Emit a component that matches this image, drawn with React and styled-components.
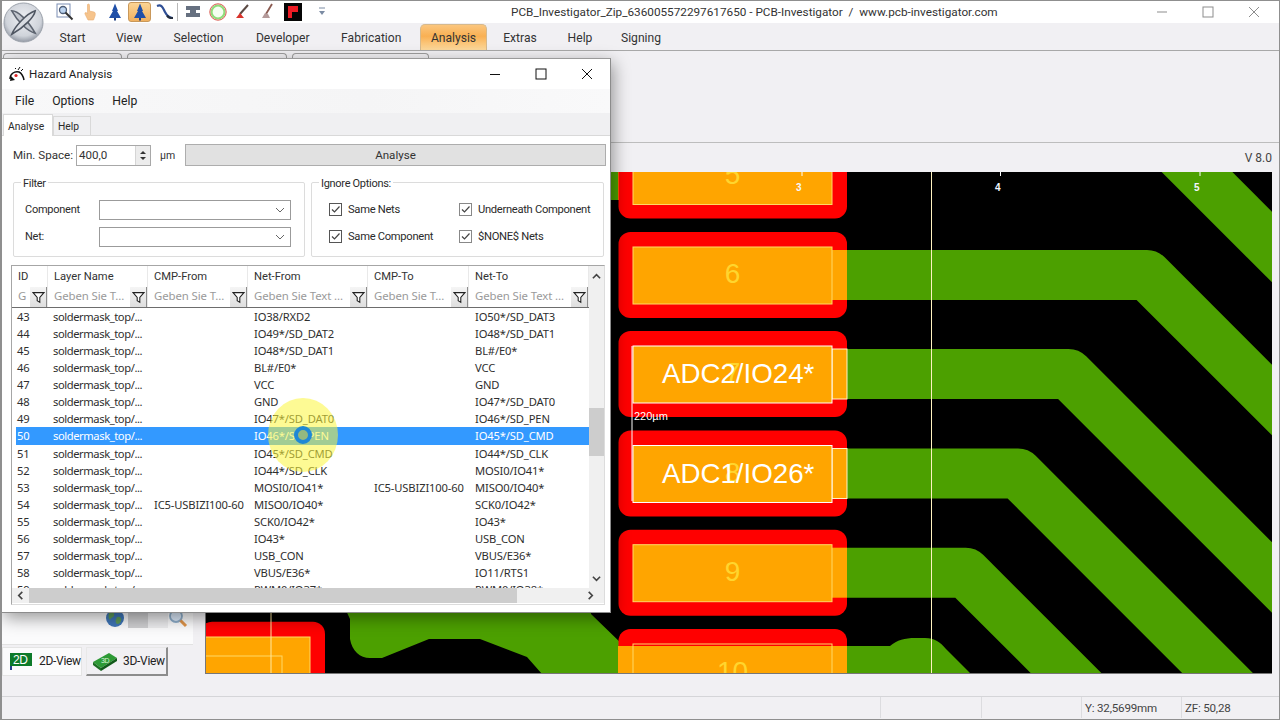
import styled, { createGlobalStyle } from "styled-components";

const GlobalStyle = createGlobalStyle`
  html, body {
    margin: 0;
    padding: 0;
    background: #f1f0f3;
  }
  * {
    box-sizing: border-box;
  }
`;

const Window = styled.div`
  position: relative;
  width: 1280px;
  height: 720px;
  overflow: hidden;
  display: flex;
  flex-direction: column;
  background: #f1f0f3;
  border: 1px solid #8f8f8f;
  border-left-width: 2px;
  font-family: Roboto, "Liberation Sans", sans-serif;
  color: #2b2b2b;
`;

const Logo = styled.svg`
  position: absolute;
  left: 1px;
  top: 1px;
  width: 41px;
  height: 41px;
`;

const TopBar = styled.div`
  height: 22px;
  flex: none;
  display: flex;
  align-items: center;
  padding-right: 2px;
  background: #fff;
`;

const QuickBar = styled.div`
  display: flex;
  align-items: center;
  width: 338px;
  height: 22px;
  padding-left: 50px;
`;

const QuickIcon = styled.div`
  width: ${(p) => p.$width || 25}px;
  height: 20px;
  flex: none;
  display: flex;
  align-items: center;
  justify-content: center;
  svg {
    width: 18px;
    height: 18px;
  }
`;

const ActiveIcon = styled(QuickIcon)`
  width: 23px;
  margin: 0 1px;
  background: linear-gradient(#fcd494, #f0b160);
  border: 1px solid #c9985a;
  border-radius: 3px;
`;

const QuickSep = styled.div`
  width: 1px;
  height: 18px;
  margin-right: 2px;
  background: #b8b8b8;
`;

const AppTitle = styled.div`
  flex: 1;
  padding-left: 171px;
  font-size: 11.75px;
  white-space: pre;
  color: #333;
`;

const WinButton = styled.div`
  width: 46px;
  height: 22px;
  flex: none;
  display: flex;
  align-items: center;
  justify-content: center;
  svg {
    width: 12px;
    height: 12px;
    stroke: ${(p) => p.$color || "#8d8d8d"};
    fill: none;
  }
`;

const RibbonTabs = styled.div`
  height: 28px;
  flex: none;
  display: flex;
  align-items: flex-end;
  padding-left: 42.5px;
  border-bottom: 1px solid #a8a8a8;
  background: #f1f0f3;
`;

const RibbonTab = styled.div`
  width: ${(p) => p.$width}px;
  height: 26px;
  flex: none;
  padding-top: 1px;
  display: flex;
  align-items: center;
  justify-content: center;
  font-size: 12.1px;
  color: #333;
  border-radius: 5px 5px 0 0;
  ${(p) =>
    p.$active &&
    `
    background: linear-gradient(#fbc67e 0%, #f9b053 45%, #fdda9d 100%);
    border: 1px solid #d6b98c;
    border-bottom: none;
    padding-top: 0;
    margin-left: 3.5px;
  `}
`;

const RibbonBody = styled.div`
  height: 91px;
  flex: none;
  display: flex;
  gap: 5px;
  padding: 2px 0 0 1px;
  background: #f1f0f3;
`;

const RibbonGroup = styled.div`
  width: ${(p) => p.$width}px;
  height: 10px;
  border: 1px solid #9d9d9d;
  border-bottom: none;
  border-radius: 4px 4px 0 0;
`;

const InfoBar = styled.div`
  height: 30px;
  flex: none;
  display: flex;
  align-items: center;
  justify-content: flex-end;
  padding-right: 7px;
  font-size: 12px;
  color: #444;
  border-top: 1px solid #bdbdbd;
`;

const MainRow = styled.div`
  height: 503px;
  flex: none;
  display: flex;
  padding-right: 7px;
`;

const Sidebar = styled.div`
  width: 203px;
  flex: none;
  display: flex;
  flex-direction: column;
`;

const SidePanel = styled.div`
  width: 191px;
  flex: 1;
  display: flex;
  align-items: flex-end;
  justify-content: flex-end;
  padding: 0 5px 16px 0;
  background: #fbfbfc;
  border-bottom: 1px solid #e2e2e2;
`;

const SideIcon = styled.svg`
  width: 20px;
  height: 20px;
  margin-right: ${(p) => p.$gap || 0}px;
`;

const SideSwatch = styled.div`
  width: 20px;
  height: 20px;
  background: ${(p) => p.$color};
`;

const ViewTabs = styled.div`
  height: 32px;
  flex: none;
  margin-bottom: -2px;
  display: flex;
  align-items: center;
  gap: 4px;
`;

const ViewTab = styled.div`
  width: ${(p) => p.$width}px;
  height: 29px;
  display: flex;
  align-items: center;
  gap: 5px;
  padding-left: 5px;
  font-size: 12px;
  letter-spacing: -0.3px;
  white-space: nowrap;
  color: #222;
  background: ${(p) => (p.$active ? "#fbfbfc" : "#f1f0f3")};
  border: 1px solid #e4e4e4;
  ${(p) =>
    !p.$active &&
    `
    border-color: #e8e8e8 #8c8c8c #8c8c8c #e8e8e8;
    border-width: 1px 2px 2px 1px;
  `}
  svg {
    width: 26px;
    height: 20px;
    flex: none;
  }
`;

const Canvas = styled.svg`
  flex: 1;
  height: 502px;
  display: block;
  border-left: 1px solid #777;
  border-bottom: 1px solid #777;
  background: #000;
`;

const StatusBar = styled.div`
  height: 22px;
  flex: none;
  margin-top: 21px;
  display: flex;
  justify-content: flex-end;
  border-top: 1px solid #d5d5d8;
`;

const StatusCell = styled.div`
  width: ${(p) => p.$width}px;
  display: flex;
  align-items: center;
  padding-left: 3px;
  border-left: 1px solid #dcdcdf;
  font-size: 11.6px;
  letter-spacing: -0.2px;
  color: #444;
`;

const Dialog = styled.div`
  position: absolute;
  left: 0;
  top: 57px;
  width: 609px;
  height: 555px;
  display: flex;
  flex-direction: column;
  background: #fff;
  border-top: 1px solid #9a9a9a;
  border-right: 1px solid #8c8c8c;
  border-bottom: 1px solid #8c8c8c;
  box-shadow: 2px 5px 16px rgba(0, 0, 0, 0.4);
`;

const DialogTitle = styled.div`
  height: 30px;
  flex: none;
  display: flex;
  align-items: center;
  padding-left: 6px;
  font-size: 11.6px;
  color: #222;
  svg.app-mark {
    margin-right: 3px;
  }
`;

const TitleText = styled.div`
  flex: 1;
`;

const DialogMenu = styled.div`
  height: 24px;
  flex: none;
  display: flex;
  align-items: center;
  gap: 18px;
  padding-left: 13px;
  font-size: 12.2px;
  color: #222;
  background: linear-gradient(90deg, #f8f8f9, #f5f5f6 60%, #f9f9fa);
`;

const DialogTabs = styled.div`
  height: 23px;
  flex: none;
  display: flex;
  align-items: flex-end;
  padding-left: 1px;
  background: #f0f0f2;
  border-bottom: 1px solid #d9d9d9;
`;

const DialogTab = styled.div`
  width: ${(p) => p.$width}px;
  height: ${(p) => (p.$active ? 22 : 19)}px;
  padding: 1px 0 0 4px;
  display: flex;
  align-items: center;
  font-size: 10.3px;
  background: ${(p) => (p.$active ? "#fff" : "#f0f0f2")};
  border: 1px solid #d9d9d9;
  border-bottom: none;
  margin-bottom: ${(p) => (p.$active ? -1 : 0)}px;
`;

const DialogBody = styled.div`
  flex: 1;
  display: flex;
  flex-direction: column;
  padding: 8px 5px 0 9px;
`;

const SpaceRow = styled.div`
  height: 22px;
  flex: none;
  display: flex;
  align-items: center;
  margin-right: -1px;
  font-size: 11.6px;
  color: #333;
`;

const SpaceLabel = styled.div`
  width: 65px;
  padding-left: 2px;
  flex: none;
  white-space: nowrap;
`;

const SpinBox = styled.div`
  width: 75px;
  height: 21px;
  flex: none;
  display: flex;
  border: 1px solid #a8a8a8;
  font-size: 11.6px;
`;

const SpinValue = styled.div`
  flex: 1;
  padding-left: 2px;
  line-height: 18px;
`;

const SpinArrows = styled.div`
  width: 15px;
  display: flex;
  flex-direction: column;
  align-items: center;
  justify-content: center;
  gap: 3px;
  background: #ececec;
  border-left: 1px solid #d5d5d5;
`;

const SpinArrow = styled.div`
  width: 0;
  height: 0;
  border-left: 3px solid transparent;
  border-right: 3px solid transparent;
  ${(p) => (p.$down ? "border-top: 3px solid #333;" : "border-bottom: 3px solid #333;")}
`;

const UnitLabel = styled.div`
  width: 34px;
  flex: none;
  padding-left: 9px;
  font-size: 10.5px;
`;

const AnalyseButton = styled.div`
  flex: 1;
  height: 22px;
  display: flex;
  align-items: center;
  justify-content: center;
  background: #e1e1e1;
  border: 1px solid #adadad;
  font-size: 11.6px;
`;

const GroupRow = styled.div`
  display: flex;
  gap: 6px;
  margin: 16px 0 0 2px;
  height: 75px;
  flex: none;
`;

const GroupBox = styled.div`
  position: relative;
  width: ${(p) => p.$width}px;
  padding: 17px 13px 0 ${(p) => p.$left}px;
  border: 1px solid #dcdcdc;
  border-radius: 2px;
`;

const Legend = styled.div`
  position: absolute;
  left: 7px;
  top: -5px;
  padding: 0 2px;
  background: #fff;
  font-size: 11px;
  letter-spacing: -0.3px;
  line-height: 12px;
`;

const FilterGrid = styled.div`
  display: grid;
  grid-template-columns: 74px 192px;
  grid-auto-rows: 21px;
  row-gap: 6px;
  align-items: start;
  font-size: 11px;
  letter-spacing: -0.25px;
  line-height: 20px;
`;

const Combo = styled.div`
  height: 20px;
  display: flex;
  align-items: center;
  justify-content: flex-end;
  padding-right: 5px;
  border: 1px solid #9b9b9b;
  svg {
    width: 10px;
    height: 6px;
  }
`;

const OptionGrid = styled.div`
  display: grid;
  grid-template-columns: 130px 1fr;
  grid-auto-rows: 21px;
  row-gap: 6px;
  align-items: center;
`;

const Option = styled.div`
  display: flex;
  align-items: center;
  gap: 6px;
  padding-bottom: 2px;
  font-size: 11.2px;
  letter-spacing: -0.3px;
  white-space: nowrap;
`;

const CheckBox = styled.div`
  width: 13px;
  height: 13px;
  flex: none;
  display: flex;
  border: 1px solid ${(p) => p.$border};
  svg {
    width: 11px;
    height: 11px;
  }
`;

const TableBox = styled.div`
  height: 340px;
  flex: none;
  margin-top: 8px;
  display: flex;
  flex-direction: column;
  border: 1px solid #a6a6a6;
  border-right-color: #dcdcdc;
  border-bottom-color: #dcdcdc;
  overflow: hidden;
`;

const TableTop = styled.div`
  flex: 1;
  display: flex;
  min-height: 0;
`;

const TableMain = styled.div`
  width: 577px;
  flex: none;
  display: flex;
  flex-direction: column;
`;

const HeadRow = styled.div`
  display: grid;
  grid-template-columns: 36px 100px 100px 120px 101px 120px;
  height: ${(p) => p.$height}px;
  flex: none;
  ${(p) => p.$line && "border-bottom: 1px solid #6d6d6d;"}
`;

const HeadCell = styled.div`
  display: flex;
  align-items: center;
  justify-content: space-between;
  padding: 0 0 0 6px;
  font-size: 11.2px;
  white-space: nowrap;
  overflow: hidden;
  color: #333;
  border-right: 1px solid #e9e9e9;
`;

const HintCell = styled(HeadCell)`
  padding-bottom: 2px;
  align-items: flex-end;
  line-height: 18px;
  font-family: "Noto Sans", sans-serif;
  font-size: 11.4px;
  letter-spacing: -0.1px;
  color: #9a9a9a;
`;

const FilterButton = styled.div`
  width: 17px;
  height: 20px;
  flex: none;
  margin-bottom: -2px;
  display: flex;
  align-items: center;
  justify-content: center;
  background: linear-gradient(#f5f5f5, #dedede);
  border-right: 1px solid #8d8d8d;
  svg {
    width: 13px;
    height: 13px;
  }
`;

const Rows = styled.div`
  flex: 1;
  min-height: 0;
  overflow: hidden;
  padding-left: 4px;
`;

const Row = styled.div`
  display: grid;
  grid-template-columns: 32px 100px 100px 120px 101px 120px;
  height: 17.07px;
  align-items: center;
  font-family: "Noto Sans", sans-serif;
  font-size: 11.2px;
  letter-spacing: -0.14px;
  white-space: nowrap;
  color: ${(p) => (p.$selected ? "#fff" : "#2e2e2e")};
  background: ${(p) => (p.$selected ? "#3399ff" : "transparent")};
`;

const RowCell = styled.div`
  padding-left: ${(p) => p.$pad || 6}px;
  overflow: hidden;
`;

const LayerCell = styled(RowCell)`
  padding-left: 5px;
  letter-spacing: -0.42px;
`;

const VScroll = styled.div`
  flex: 1;
  display: flex;
  flex-direction: column;
  background: #f0f0f0;
`;

const ScrollArrow = styled.div`
  height: ${(p) => p.$size || 17}px;
  width: ${(p) => p.$width || "auto"};
  flex: none;
  display: flex;
  align-items: center;
  justify-content: center;
  svg {
    width: 9px;
    height: 9px;
  }
`;

const VTrack = styled.div`
  flex: 1;
  padding-top: ${(p) => p.$offset}px;
`;

const VThumb = styled.div`
  height: 48px;
  background: #cdcdcd;
`;

const HScroll = styled.div`
  height: 15px;
  flex: none;
  margin-bottom: 1px;
  display: flex;
  align-items: center;
  background: #f0f0f0;
`;

const HThumb = styled.div`
  width: 488px;
  height: 15px;
  margin-left: 1px;
  background: #cdcdcd;
`;

const HRest = styled.div`
  flex: 1;
`;

const CursorGlow = styled.div`
  position: absolute;
  left: 266px;
  top: 397px;
  width: 70px;
  height: 74px;
  border-radius: 50%;
  display: flex;
  align-items: center;
  justify-content: center;
  background: rgba(252, 245, 60, 0.55);
`;

const CursorDot = styled.div`
  width: 18px;
  height: 18px;
  border-radius: 50%;
  background: #94b97f;
  border: 4px solid #1f88d6;
`;

const tabs = [
  ["Start", 56],
  ["View", 57],
  ["Selection", 82],
  ["Developer", 86.5],
  ["Fabrication", 90.5],
  ["Analysis", 67],
  ["Extras", 66],
  ["Help", 54],
  ["Signing", 68],
];

const rows = [
  ["43", "", "IO38/RXD2", "", "IO50*/SD_DAT3"],
  ["44", "", "IO49*/SD_DAT2", "", "IO48*/SD_DAT1"],
  ["45", "", "IO48*/SD_DAT1", "", "BL#/E0*"],
  ["46", "", "BL#/E0*", "", "VCC"],
  ["47", "", "VCC", "", "GND"],
  ["48", "", "GND", "", "IO47*/SD_DAT0"],
  ["49", "", "IO47*/SD_DAT0", "", "IO46*/SD_PEN"],
  ["50", "", "IO46*/SD_PEN", "", "IO45*/SD_CMD"],
  ["51", "", "IO45*/SD_CMD", "", "IO44*/SD_CLK"],
  ["52", "", "IO44*/SD_CLK", "", "MOSI0/IO41*"],
  ["53", "", "MOSI0/IO41*", "IC5-USBIZI100-60", "MISO0/IO40*"],
  ["54", "IC5-USBIZI100-60", "MISO0/IO40*", "", "SCK0/IO42*"],
  ["55", "", "SCK0/IO42*", "", "IO43*"],
  ["56", "", "IO43*", "", "USB_CON"],
  ["57", "", "USB_CON", "", "VBUS/E36*"],
  ["58", "", "VBUS/E36*", "", "IO11/RTS1"],
  ["59", "", "PWM0/IO37*", "", "PWM0/IO38*"],
];

const headers = [
  ["ID", "G"],
  ["Layer Name", "Geben Sie T..."],
  ["CMP-From", "Geben Sie T..."],
  ["Net-From", "Geben Sie Text ..."],
  ["CMP-To", "Geben Sie T..."],
  ["Net-To", "Geben Sie Text ..."],
];

const pads = [
  { top: 133.5, label: "5" },
  { top: 233, label: "6", trace: 276, corner: 1147 },
  { top: 332, label: "7", trace: 375, corner: 1068.5, name: "ADC2/IO24*" },
  { top: 431.5, label: "8", trace: 474.5, corner: 1018, name: "ADC1/IO26*" },
  { top: 530.7, label: "9", trace: 573.7, corner: 965.7 },
];

const Tree = () => (
  <svg viewBox="0 0 18 18">
    <path d="M9 0.500 12 8H11L15 15H3L7 8H6Z" fill="#1f4fa8" />
    <rect x="8" y="15" width="2" height="2.500" fill="#1f3f80" />
  </svg>
);

const Funnel = () => (
  <svg viewBox="0 0 12 12">
    <path d="M1 1.500H11L7.200 6V10.500L4.800 9V6Z" fill="#fff" stroke="#222" strokeWidth="1" />
  </svg>
);

const Chevron = ({ d }) => (
  <svg viewBox="0 0 10 10">
    <path d={d} fill="none" stroke="#444" strokeWidth="1.800" />
  </svg>
);

const Check = () => (
  <svg viewBox="0 0 11 11">
    <path d="M2 5.500 4.500 8 9.500 2.500" fill="none" stroke="#444" strokeWidth="1.200" />
  </svg>
);

const PadShape = ({ top, label, trace, name }) => {
  const selected = Boolean(name);
  const line = selected ? "#ffffff" : "#ffd966";
  return (
    <g>
      <rect x="618.5" y={top} width="228.500" height="86" rx="12" fill="#ff0000" />
      {trace && <rect x="832" y={trace - 25} width="15" height="50" fill="#ffa500" stroke={selected ? "#fff2c8" : "none"} strokeWidth="1" />}
      <rect x="633" y={top + 15} width="199" height="57" fill="#ffa500" stroke={line} strokeWidth="1" />
      <text x="732.500" y={top + 51} textAnchor="middle" fontSize="28" fontFamily="Liberation Sans" fill="#ffd52e">
        {label}
      </text>
      {name && (
        <text x="662" y={top + 52} fontSize="27.700" fontFamily="Liberation Sans" fill="#ffffff">
          {name}
        </text>
      )}
    </g>
  );
};

const Board = () => (
  <Canvas viewBox="206 173 1066 501" preserveAspectRatio="none">
    <path
      d="M343 605 350 620V640C352 652 360 659 370 659H382L429 640H480L527 658 542 675H625V648L591 615V605Z"
      fill="#4ca000"
    />
    <rect x="200" y="622.700" width="125" height="70" rx="12" fill="#ff0000" />
    <rect x="200" y="638" width="110" height="50" fill="#ffa500" stroke="#ffd966" />
    <rect x="200" y="657" width="82" height="30" fill="none" stroke="#ffd966" />
    <line x1="271" y1="600" x2="271" y2="680" stroke="#ffe9a0" />

    <rect x="605" y="165" width="20" height="36" fill="#4ca000" />
    <path d="M1097 73 1400 376" fill="none" stroke="#4ca000" strokeWidth="50" />
    {pads
      .filter((p) => p.trace)
      .map((p) => (
        <path
          key={p.label}
          d={`M840 ${p.trace}H${p.corner}L${p.corner + 400} ${p.trace + 400}`}
          fill="none"
          stroke="#4ca000"
          strokeWidth="50"
          strokeLinejoin="round"
        />
      ))}
    <path d="M847 647H890C897 641 905 639 915 639H925C935 639 940 643 946 650L971 675H847Z" fill="#4ca000" />

    <rect x="618" y="165" width="15" height="36" fill="#ffa500" />
    {pads.map((p) => (
      <PadShape key={p.label} {...p} />
    ))}
    <rect x="618.500" y="630" width="228.500" height="60" rx="12" fill="#ff0000" />
    <rect x="618" y="647" width="229" height="40" fill="#ffa500" />
    <rect x="633" y="645" width="199" height="40" fill="none" stroke="#ffd966" />
    <text x="732.500" y="682" textAnchor="middle" fontSize="28" fontFamily="Liberation Sans" fill="#ffd52e">
      10
    </text>

    <line x1="632" y1="347" x2="632" y2="502" stroke="#ffffff" />
    <line x1="931.500" y1="173" x2="931.500" y2="675" stroke="#fff2c0" />
    <text x="634" y="421" fontSize="11" fontFamily="Liberation Sans" fill="#ffffff">
      220µm
    </text>

    {[
      [802, 798, "3"],
      [1000.5, 997, "4"],
      [1200, 1196, "5"],
    ].map(([tick, x, label]) => (
      <g key={label}>
        <line x1={tick} y1="173" x2={tick} y2="177" stroke="#ffffff" />
        <text x={x - 2} y="192" fontSize="10" fontWeight="bold" fontFamily="Liberation Sans" fill="#f3f6ff">
          {label}
        </text>
      </g>
    ))}
  </Canvas>
);

const App = () => (
  <Window>
    <GlobalStyle />
    <TopBar>
      <QuickBar>
        <QuickIcon>
          <svg viewBox="0 0 18 18">
            <rect x="1" y="1" width="13" height="13" fill="#fff" stroke="#7d8fb5" />
            <circle cx="7" cy="7" r="3.500" fill="#bcd4f0" stroke="#4d5d78" strokeWidth="1.300" />
            <path d="M9.500 9.500 16.500 16.500" stroke="#333" strokeWidth="2" />
          </svg>
        </QuickIcon>
        <QuickIcon>
          <svg viewBox="0 0 18 18">
            <path d="M6.500 1.500C7.500.5 8.500 1 8.500 2.500V8L13 9C14.500 9.500 14.500 11 14 13L12.500 17H7L4 11C3.500 9.500 5 9 6.500 10.500Z" fill="#f6c48c" stroke="#e9ad70" strokeWidth=".6" />
          </svg>
        </QuickIcon>
        <QuickIcon>
          <Tree />
        </QuickIcon>
        <ActiveIcon>
          <Tree />
        </ActiveIcon>
        <QuickIcon>
          <svg viewBox="0 0 18 18">
            <path d="M1 3C6 1 7 5 9 9 11 13 13 15 17 15" fill="none" stroke="#2f4f96" strokeWidth="2.200" />
            <path d="M11 12.500C13 15 14 15 17 15" fill="none" stroke="#222c3e" strokeWidth="2.200" />
          </svg>
        </QuickIcon>
        <QuickSep />
        <QuickIcon>
          <svg viewBox="0 0 18 18">
            <path d="M2 3H16V7H12V10H16V14H2V10H6V7H2Z" fill="#667080" />
          </svg>
        </QuickIcon>
        <QuickIcon>
          <svg viewBox="0 0 18 18">
            <circle cx="9" cy="9" r="6.500" fill="#f4fff0" stroke="#8fdc7a" strokeWidth="2.200" />
            <circle cx="9" cy="9" r="8.200" fill="none" stroke="#d9574e" strokeWidth="1" />
          </svg>
        </QuickIcon>
        <QuickIcon>
          <svg viewBox="0 0 18 18">
            <path d="M14 2 6 11" stroke="#5b4a44" strokeWidth="2" />
            <path d="M6 10 2 15H10Z" fill="#d9332b" />
          </svg>
        </QuickIcon>
        <QuickIcon>
          <svg viewBox="0 0 18 18">
            <path d="M13 1 7 11" stroke="#8a5a50" strokeWidth="1.800" />
            <path d="M6 10 3 15H11L9 11Z" fill="#b49a9a" />
          </svg>
        </QuickIcon>
        <QuickIcon>
          <svg viewBox="0 0 18 18">
            <rect width="18" height="18" fill="#050505" />
            <path d="M4 3H14V9H8V15H4Z" fill="#ee1c25" />
          </svg>
        </QuickIcon>
        <QuickIcon $width={33}>
          <svg viewBox="0 0 18 18">
            <path d="M6 5H12" stroke="#7b8ba3" strokeWidth="1" />
            <path d="M6 8H12L9 12Z" fill="#7b8ba3" />
          </svg>
        </QuickIcon>
      </QuickBar>
      <AppTitle>{"PCB_Investigator_Zip_636005572297617650 - PCB-Investigator  /  www.pcb-investigator.com"}</AppTitle>
      <WinButton>
        <svg viewBox="0 0 12 12">
          <path d="M1 6H11" />
        </svg>
      </WinButton>
      <WinButton>
        <svg viewBox="0 0 12 12">
          <rect x="1" y="1" width="10" height="10" />
        </svg>
      </WinButton>
      <WinButton>
        <svg viewBox="0 0 12 12">
          <path d="M1 1 11 11M11 1 1 11" />
        </svg>
      </WinButton>
    </TopBar>
    <RibbonTabs>
      {tabs.map(([tab, width]) => (
        <RibbonTab key={tab} $width={width} $active={tab === "Analysis"}>
          {tab}
        </RibbonTab>
      ))}
    </RibbonTabs>
    <RibbonBody>
      <RibbonGroup $width={119} />
      <RibbonGroup $width={160} />
      <RibbonGroup $width={137} />
    </RibbonBody>
    <InfoBar>V 8.0</InfoBar>
    <MainRow>
      <Sidebar>
        <SidePanel>
          <SideIcon $gap={3} viewBox="0 0 20 20">
            <circle cx="10" cy="10" r="9" fill="#3f76b8" />
            <path d="M5 4C8 3 10 5 9 8 8 10 6 9 5 12 3 10 3 6 5 4ZM12 9C15 8 17 10 16 13 15 16 12 17 11 15 10 13 11 11 12 9Z" fill="#5d9a5a" />
          </SideIcon>
          <SideSwatch $color="#cfcfd1" />
          <SideSwatch $color="#ececee" />
          <SideIcon viewBox="0 0 20 20">
            <circle cx="8" cy="8" r="6" fill="#dceafa" stroke="#8eaecb" strokeWidth="1.800" />
            <path d="M12.500 12.500 18 18" stroke="#e0954a" strokeWidth="3" />
          </SideIcon>
        </SidePanel>
        <ViewTabs>
          <ViewTab $active $width={80}>
            <svg viewBox="0 0 26 20">
              <path d="M2 2H24V15H4V19H2Z" fill="#0d7a2a" />
              <path d="M2 15H4V19H2Z" fill="#23408e" />
              <text x="5" y="13" fontSize="12" fontFamily="Liberation Sans" fill="#fff">
                2D
              </text>
            </svg>
            2D-View
          </ViewTab>
          <ViewTab $width={82}>
            <svg viewBox="0 0 26 20">
              <path d="M1 11 17 2 25 7 9 17Z" fill="#2d9a35" />
              <path d="M1 11 9 17V20L1 14Z" fill="#1b6e22" />
              <path d="M9 17 25 7V10L9 20Z" fill="#125a1a" />
              <text x="9" y="12" fontSize="7" fontFamily="Liberation Sans" fill="#d8f5d8">
                3D
              </text>
            </svg>
            3D-View
          </ViewTab>
        </ViewTabs>
      </Sidebar>
      <Board />
    </MainRow>
    <StatusBar>
      <StatusCell $width={101} />
      <StatusCell $width={100} />
      <StatusCell $width={100}>Y: 32,5699mm</StatusCell>
      <StatusCell $width={98}>ZF: 50,28</StatusCell>
    </StatusBar>

    <Logo viewBox="0 0 42 42">
      <defs>
        <radialGradient id="logoGlass" cx="50%" cy="40%" r="62%">
          <stop offset="0%" stopColor="#eef0f4" />
          <stop offset="72%" stopColor="#cfd3da" />
          <stop offset="100%" stopColor="#8c929e" />
        </radialGradient>
      </defs>
      <circle cx="21" cy="21" r="20" fill="url(#logoGlass)" stroke="#9aa0aa" />
      <path d="M9 9C15 9 25 18 33 32 25 30 15 20 9 9Z" fill="#c3c7cf" stroke="#5d6470" strokeWidth="1.600" />
      <path d="M33 9C32 15 22 26 9 33 12 25 24 12 33 9Z" fill="#d9dce2" stroke="#4f5662" strokeWidth="1.600" />
    </Logo>

    <Dialog>
      <DialogTitle>
        <svg className="app-mark" width="18" height="16" viewBox="0 0 18 16">
          <path d="M2 13C2 8 6 5 11 6 13 7 15 9 16 14" fill="none" stroke="#111" strokeWidth="1.500" />
          <path d="M3 10 7 14 2 15Z" fill="#111" />
          <circle cx="8" cy="9.500" r="1.600" fill="#d22" />
          <path d="M12 1 10 4M15 3 13 5M7 2 8 3" stroke="#111" />
        </svg>
        <TitleText>Hazard Analysis</TitleText>
        <WinButton $color="#111">
          <svg viewBox="0 0 12 12">
            <path d="M1 6.500H11" />
          </svg>
        </WinButton>
        <WinButton $color="#111">
          <svg viewBox="0 0 12 12">
            <rect x="1" y="1" width="10" height="10" />
          </svg>
        </WinButton>
        <WinButton $color="#111">
          <svg viewBox="0 0 12 12">
            <path d="M1 1 11 11M11 1 1 11" />
          </svg>
        </WinButton>
      </DialogTitle>
      <DialogMenu>
        <span>File</span>
        <span>Options</span>
        <span>Help</span>
      </DialogMenu>
      <DialogTabs>
        <DialogTab $active $width={50}>
          Analyse
        </DialogTab>
        <DialogTab $width={38}>Help</DialogTab>
      </DialogTabs>
      <DialogBody>
        <SpaceRow>
          <SpaceLabel>Min. Space:</SpaceLabel>
          <SpinBox>
            <SpinValue>400,0</SpinValue>
            <SpinArrows>
              <SpinArrow />
              <SpinArrow $down />
            </SpinArrows>
          </SpinBox>
          <UnitLabel>µm</UnitLabel>
          <AnalyseButton>Analyse</AnalyseButton>
        </SpaceRow>
        <GroupRow>
          <GroupBox $width={292} $left={11}>
            <Legend>Filter</Legend>
            <FilterGrid>
              <span>Component</span>
              <Combo>
                <svg viewBox="0 0 10 6">
                  <path d="M1 1 5 5 9 1" fill="none" stroke="#666" />
                </svg>
              </Combo>
              <span>Net:</span>
              <Combo>
                <svg viewBox="0 0 10 6">
                  <path d="M1 1 5 5 9 1" fill="none" stroke="#666" />
                </svg>
              </Combo>
            </FilterGrid>
          </GroupBox>
          <GroupBox $width={293} $left={17}>
            <Legend>Ignore Options:</Legend>
            <OptionGrid>
              <Option>
                <CheckBox $border="#555">
                  <Check />
                </CheckBox>
                Same Nets
              </Option>
              <Option>
                <CheckBox $border="#888">
                  <Check />
                </CheckBox>
                Underneath Component
              </Option>
              <Option>
                <CheckBox $border="#555">
                  <Check />
                </CheckBox>
                Same Component
              </Option>
              <Option>
                <CheckBox $border="#888">
                  <Check />
                </CheckBox>
                $NONE$ Nets
              </Option>
            </OptionGrid>
          </GroupBox>
        </GroupRow>
        <TableBox>
          <TableTop>
            <TableMain>
              <HeadRow $height={21}>
                {headers.map(([name]) => (
                  <HeadCell key={name}>{name}</HeadCell>
                ))}
              </HeadRow>
              <HeadRow $height={21} $line>
                {headers.map(([name, hint]) => (
                  <HintCell key={name}>
                    {hint}
                    <FilterButton>
                      <Funnel />
                    </FilterButton>
                  </HintCell>
                ))}
              </HeadRow>
              <Rows>
                {rows.map(([id, cmpFrom, netFrom, cmpTo, netTo]) => (
                  <Row key={id} $selected={id === "50"}>
                    <RowCell $pad={1}>{id}</RowCell>
                    <LayerCell>soldermask_top/...</LayerCell>
                    <RowCell>{cmpFrom}</RowCell>
                    <RowCell>{netFrom}</RowCell>
                    <RowCell>{cmpTo}</RowCell>
                    <RowCell>{netTo}</RowCell>
                  </Row>
                ))}
              </Rows>
            </TableMain>
            <VScroll>
              <ScrollArrow $size={20}>
                <Chevron d="M1 7 5 3 9 7" />
              </ScrollArrow>
              <VTrack $offset={122}>
                <VThumb />
              </VTrack>
              <ScrollArrow $size={20}>
                <Chevron d="M1 3 5 7 9 3" />
              </ScrollArrow>
            </VScroll>
          </TableTop>
          <HScroll>
            <ScrollArrow $size={15} $width="16px">
              <Chevron d="M7 1 3 5 7 9" />
            </ScrollArrow>
            <HThumb />
            <HRest />
            <ScrollArrow $size={15} $width="28px">
              <Chevron d="M3 1 7 5 3 9" />
            </ScrollArrow>
          </HScroll>
        </TableBox>
      </DialogBody>
    </Dialog>
    <CursorGlow>
      <CursorDot />
    </CursorGlow>
  </Window>
);

export default App;
